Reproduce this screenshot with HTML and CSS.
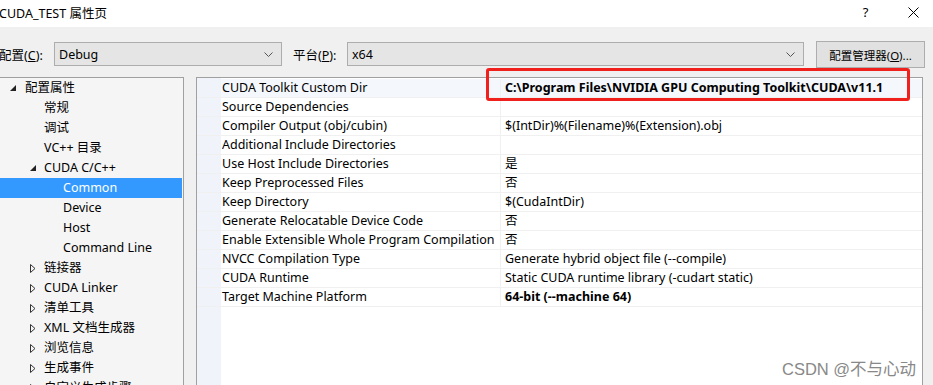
FILE: index.html
```html
<!DOCTYPE html>
<html lang="zh-CN">
<head>
    <meta charset="UTF-8">
    <title>CUDA_TEST 属性页</title>
    <link rel="stylesheet" href="styles.css">
</head>
<body>
    <div class="titlebar">
        <div class="title">CUDA_TEST 属性页</div>
        <div class="help">?</div>
        <div class="close">
            <svg width="11" height="11" viewBox="0 0 11 11"><path d="M0.5 0.5 L10.5 10.5 M10.5 0.5 L0.5 10.5" stroke="#000" stroke-width="1"/></svg>
        </div>
    </div>

    <div class="toolbar">
        <span class="label">配置(<u>C</u>):</span>
        <div class="combo combo-config">
            <span>Debug</span>
            <svg width="9" height="5" viewBox="0 0 9 5"><path d="M0.5 0.5 L4.5 4.5 L8.5 0.5" fill="none" stroke="#555"/></svg>
        </div>
        <span class="label label-platform">平台(<u>P</u>):</span>
        <div class="combo combo-platform">
            <span>x64</span>
            <svg width="9" height="5" viewBox="0 0 9 5"><path d="M0.5 0.5 L4.5 4.5 L8.5 0.5" fill="none" stroke="#555"/></svg>
        </div>
        <button class="manager">配置管理器(<u>O</u>)...</button>
    </div>

    <div class="main">
        <div class="tree">
            <div class="node lvl0"><span class="tri"><svg width="6" height="6" viewBox="0 0 6 6"><path d="M6 0 L6 6 L0 6 Z" fill="#222"/></svg></span>配置属性</div>
            <div class="node lvl1">常规</div>
            <div class="node lvl1">调试</div>
            <div class="node lvl1">VC++ 目录</div>
            <div class="node lvl1"><span class="tri"><svg width="6" height="6" viewBox="0 0 6 6"><path d="M6 0 L6 6 L0 6 Z" fill="#222"/></svg></span>CUDA C/C++</div>
            <div class="node lvl2 selected">Common</div>
            <div class="node lvl2">Device</div>
            <div class="node lvl2">Host</div>
            <div class="node lvl2">Command Line</div>
            <div class="node lvl1"><span class="tri"><svg width="6" height="9" viewBox="0 0 6 9"><path d="M0.5 0.5 L5 4.5 L0.5 8.5 Z" fill="none" stroke="#333"/></svg></span>链接器</div>
            <div class="node lvl1"><span class="tri"><svg width="6" height="9" viewBox="0 0 6 9"><path d="M0.5 0.5 L5 4.5 L0.5 8.5 Z" fill="none" stroke="#333"/></svg></span>CUDA Linker</div>
            <div class="node lvl1"><span class="tri"><svg width="6" height="9" viewBox="0 0 6 9"><path d="M0.5 0.5 L5 4.5 L0.5 8.5 Z" fill="none" stroke="#333"/></svg></span>清单工具</div>
            <div class="node lvl1"><span class="tri"><svg width="6" height="9" viewBox="0 0 6 9"><path d="M0.5 0.5 L5 4.5 L0.5 8.5 Z" fill="none" stroke="#333"/></svg></span>XML 文档生成器</div>
            <div class="node lvl1"><span class="tri"><svg width="6" height="9" viewBox="0 0 6 9"><path d="M0.5 0.5 L5 4.5 L0.5 8.5 Z" fill="none" stroke="#333"/></svg></span>浏览信息</div>
            <div class="node lvl1"><span class="tri"><svg width="6" height="9" viewBox="0 0 6 9"><path d="M0.5 0.5 L5 4.5 L0.5 8.5 Z" fill="none" stroke="#333"/></svg></span>生成事件</div>
            <div class="node lvl1"><span class="tri"><svg width="6" height="9" viewBox="0 0 6 9"><path d="M0.5 0.5 L5 4.5 L0.5 8.5 Z" fill="none" stroke="#333"/></svg></span>自定义生成步骤</div>
        </div>

        <div class="grid">
            <div class="row current"><div class="gutter"></div><div class="name">CUDA Toolkit Custom Dir</div><div class="value bold">C:\Program Files\NVIDIA GPU Computing Toolkit\CUDA\v11.1</div></div>
            <div class="row"><div class="gutter"></div><div class="name">Source Dependencies</div><div class="value"></div></div>
            <div class="row"><div class="gutter"></div><div class="name">Compiler Output (obj/cubin)</div><div class="value">$(IntDir)%(Filename)%(Extension).obj</div></div>
            <div class="row"><div class="gutter"></div><div class="name">Additional Include Directories</div><div class="value"></div></div>
            <div class="row"><div class="gutter"></div><div class="name">Use Host Include Directories</div><div class="value">是</div></div>
            <div class="row"><div class="gutter"></div><div class="name">Keep Preprocessed Files</div><div class="value">否</div></div>
            <div class="row"><div class="gutter"></div><div class="name">Keep Directory</div><div class="value">$(CudaIntDir)</div></div>
            <div class="row"><div class="gutter"></div><div class="name">Generate Relocatable Device Code</div><div class="value">否</div></div>
            <div class="row"><div class="gutter"></div><div class="name">Enable Extensible Whole Program Compilation</div><div class="value">否</div></div>
            <div class="row"><div class="gutter"></div><div class="name">NVCC Compilation Type</div><div class="value">Generate hybrid object file (--compile)</div></div>
            <div class="row"><div class="gutter"></div><div class="name">CUDA Runtime</div><div class="value">Static CUDA runtime library (-cudart static)</div></div>
            <div class="row"><div class="gutter"></div><div class="name">Target Machine Platform</div><div class="value bold">64-bit (--machine 64)</div></div>
        </div>
    </div>

    <div class="highlight-box"></div>
    <div class="watermark">CSDN @不与心动</div>
</body>
</html>
```

FILE: styles.css
```css
body {
    margin: 0;
    width: 933px;
    height: 385px;
    overflow: hidden;
    background-color: #f0f0f0;
    font-family: "Noto Sans", "Noto Sans CJK SC", sans-serif;
    font-size: 12.5px;
    color: #000;
    position: relative;
}

.titlebar {
    height: 27px;
    background-color: #fff;
    display: flex;
    align-items: center;
}

.title {
    flex: 1;
    margin-left: -1px;
    margin-top: -3px;
}

.help {
    width: 47px;
    text-align: center;
    font-size: 13px;
    margin-top: -3px;
}

.close {
    width: 40px;
    display: flex;
    justify-content: center;
    margin-top: -3px;
    padding-left: 4px;
}

.toolbar {
    height: 50px;
    display: flex;
    align-items: center;
    padding-top: 4px;
    box-sizing: border-box;
}

.toolbar u {
    text-decoration: underline;
    text-underline-offset: 1px;
}

.label {
    margin-left: -1px;
    width: 55px;
}

.label-platform {
    margin-left: 11px;
    width: 54px;
}

.combo {
    height: 24px;
    box-sizing: border-box;
    border: 1px solid #adadad;
    background-color: #e5e5e5;
    display: flex;
    align-items: center;
    justify-content: space-between;
    padding: 0 8px 0 4px;
}

.combo-config {
    width: 228px;
}

.combo-platform {
    width: 457px;
}

.manager {
    margin-left: 12px;
    width: 109px;
    height: 27px;
    border: 1px solid #adadad;
    background-color: #e1e1e1;
    font-family: inherit;
    font-size: 11.5px;
    padding: 0;
    margin-top: 1px;
    white-space: nowrap;
}

.main {
    display: flex;
    gap: 12px;
    height: 308px;
}

.tree {
    width: 185px;
    margin-left: -1px;
    box-sizing: border-box;
    border: 1px solid #a0a0a0;
    border-bottom: none;
    background-color: #f5f5f5;
}

.node {
    height: 20px;
    line-height: 20px;
    position: relative;
    white-space: nowrap;
}

.node .tri {
    position: absolute;
    top: 0;
    height: 20px;
    display: flex;
    align-items: center;
}

.lvl0 {
    padding-left: 25px;
}

.lvl0 .tri {
    left: 10px;
}

.lvl1 {
    padding-left: 44px;
}

.lvl1 .tri {
    left: 30px;
}

.lvl2 {
    padding-left: 63px;
}

.selected {
    background-color: #3399ff;
    color: #fff;
    margin-right: 1px;
}

.grid {
    width: 727px;
    box-sizing: border-box;
    border: 1px solid #a0a0a0;
    border-bottom: none;
    background-color: #fff;
    padding-top: 1px;
    position: relative;
}

.grid::before {
    content: "";
    position: absolute;
    left: 0;
    top: 0;
    bottom: 0;
    width: 24px;
    background-color: #f0f3f9;
}

.row {
    display: flex;
    height: 19px;
    box-sizing: border-box;
    border-bottom: 1px solid #f0f0f0;
    line-height: 18px;
    white-space: nowrap;
    position: relative;
}

.gutter {
    width: 24px;
    flex: none;
}

.name {
    width: 280px;
    flex: none;
    padding-left: 1px;
    border-right: 1px solid #f0f0f0;
    box-sizing: border-box;
}

.value {
    flex: 1;
    padding-left: 4px;
}

.current .name,
.current .value {
    background-color: #f4f7fc;
}

.bold {
    font-weight: bold;
}

.highlight-box {
    position: absolute;
    left: 486px;
    top: 68px;
    width: 424px;
    height: 33px;
    box-sizing: border-box;
    border: 3px solid #f0201c;
    border-radius: 3px;
}

.watermark {
    position: absolute;
    left: 782px;
    top: 356px;
    font-family: "Liberation Sans", "Noto Sans CJK SC", sans-serif;
    font-size: 16.5px;
    color: #888;
}
```
